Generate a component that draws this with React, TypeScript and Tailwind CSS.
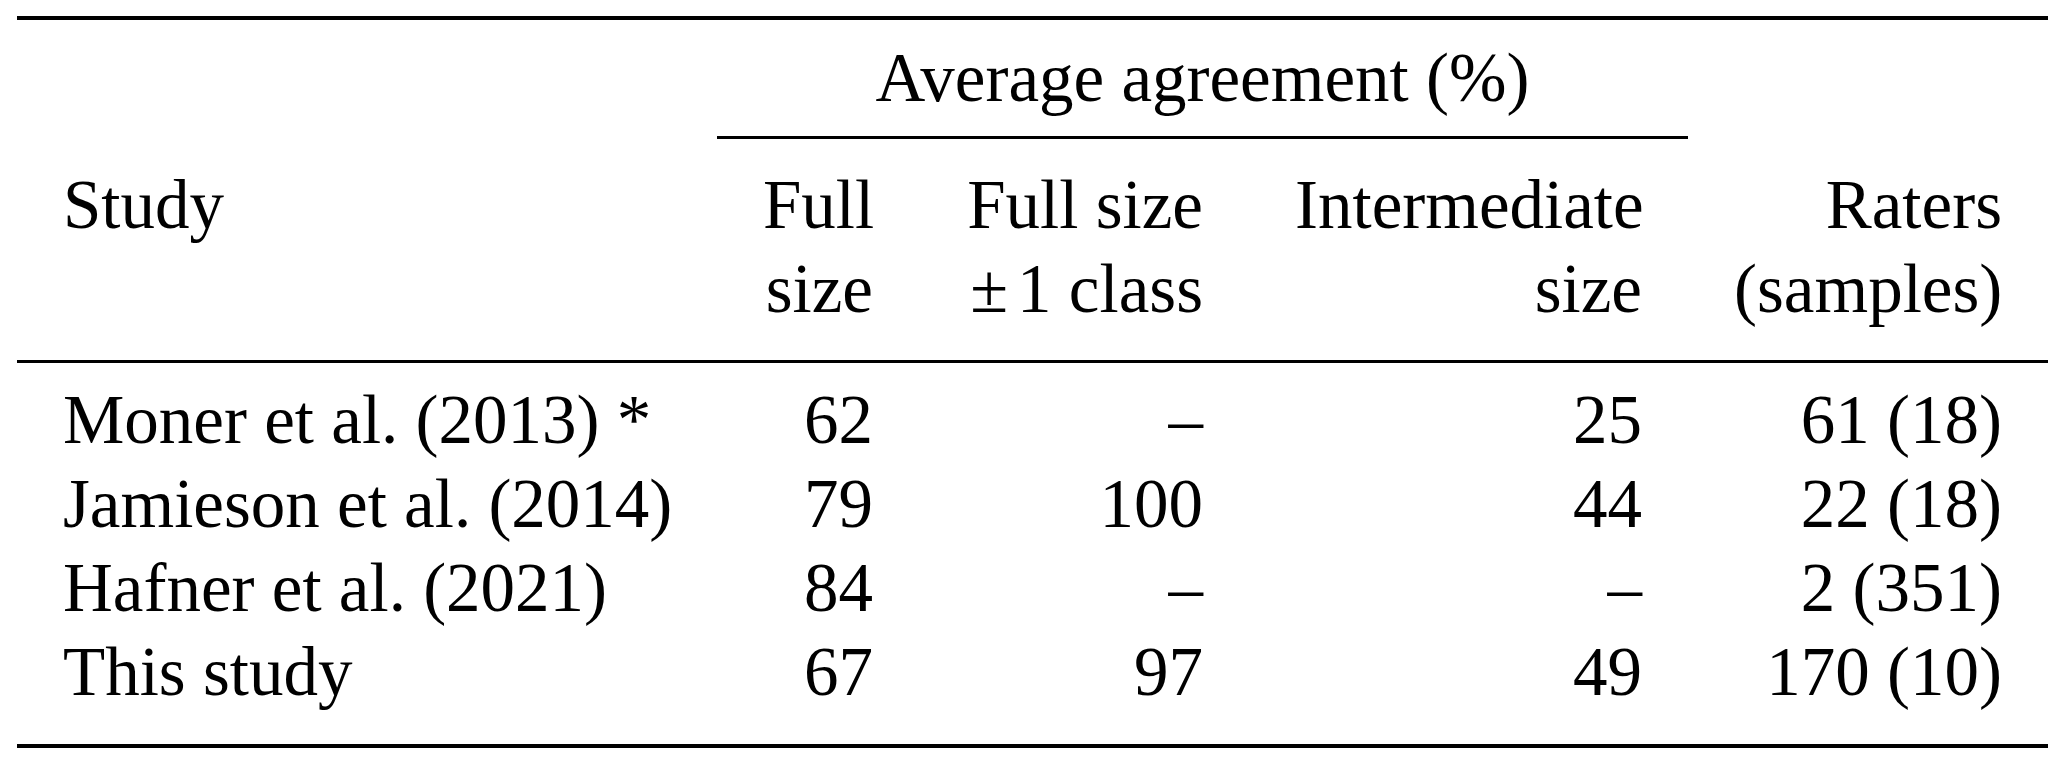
const cols = "grid grid-cols-[700px_202px_330px_439px_360px]";

const rows = [
  { study: "Moner et al. (2013) *", full: "62", pm: "–", mid: "25", raters: "61 (18)" },
  { study: "Jamieson et al. (2014)", full: "79", pm: "100", mid: "44", raters: "22 (18)" },
  { study: "Hafner et al. (2021)", full: "84", pm: "–", mid: "–", raters: "2 (351)" },
  { study: "This study", full: "67", pm: "97", mid: "49", raters: "170 (10)" },
];

export default function App() {
  return (
    <div className="min-h-screen bg-white pl-[17px] pt-[16px]">
      <div className="w-[2031px] font-['Liberation_Serif',serif] text-[69px] leading-[84px] text-black">
        {/* top rule */}
        <div className="h-[4px] bg-black" />

        {/* spanning header */}
        <div className={`${cols} pt-[16px]`}>
          <div />
          <div className="col-span-3 text-center">Average agreement (%)</div>
          <div />
        </div>
        <div className={`${cols} pt-[16px]`}>
          <div />
          <div className="col-span-3 h-[3px] bg-black" />
          <div />
        </div>

        {/* column headers */}
        <div className={`${cols} pt-[24px]`}>
          <div className="px-[46px] text-left">Study</div>
          <div className="px-[46px] text-right">
            <div>Full</div>
            <div>size</div>
          </div>
          <div className="px-[46px] text-right">
            <div>Full size</div>
            <div>
              <span className="mr-[9px]">±</span>1 class
            </div>
          </div>
          <div className="px-[46px] text-right">
            <div>Intermediate</div>
            <div>size</div>
          </div>
          <div className="px-[46px] text-right">
            <div>Raters</div>
            <div>(samples)</div>
          </div>
        </div>

        {/* mid rule */}
        <div className="mt-[29px] h-[3px] bg-black" />

        <div className="pt-[15px]">
          {rows.map((r) => (
            <div key={r.study} className={cols}>
              <div className="whitespace-nowrap px-[46px] text-left">{r.study}</div>
              <div className="px-[46px] text-right">{r.full}</div>
              <div className="px-[46px] text-right">{r.pm}</div>
              <div className="px-[46px] text-right">{r.mid}</div>
              <div className="whitespace-nowrap px-[46px] text-right">{r.raters}</div>
            </div>
          ))}
        </div>

        {/* bottom rule */}
        <div className="mt-[30px] h-[4px] bg-black" />
      </div>
    </div>
  );
}
